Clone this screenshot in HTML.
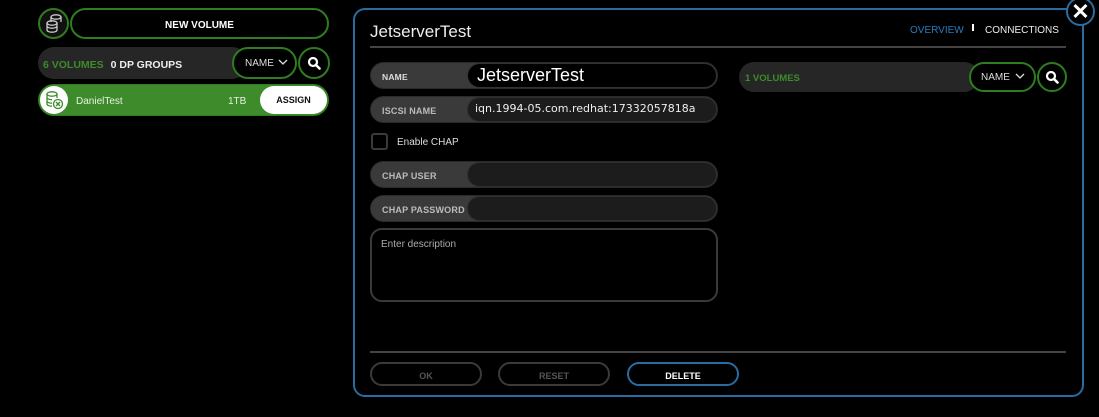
<!DOCTYPE html>
<html><head><style>
*{box-sizing:border-box;margin:0;padding:0}
body{width:1099px;height:417px;background:#000;position:relative;overflow:hidden;font-family:"Liberation Sans",sans-serif;color:#fff}
.a{position:absolute}
.pill{border-radius:16px}
.lbl{font-size:9px;font-weight:bold;color:#ddd;letter-spacing:.2px}
.row{position:absolute;left:370px;width:348px;background:#3a3a3a;border-radius:14px;border:1px solid #2a2a2a}
.row .in{position:absolute;left:96px;right:0;top:0;bottom:0;background:#1c1c1c;border-radius:13px;border:1px solid #2e2e2e}
.row .lbl{position:absolute;left:11px;top:9px}
.btn{position:absolute;top:362px;width:112px;height:24px;border:2px solid #3a3a3a;border-radius:13px;font-size:9px;font-weight:bold;color:#555;text-align:center;line-height:24px}
</style></head><body>
<!-- left -->
<div class="a" style="left:38px;top:8px;width:31px;height:31px;border:2px solid #2e7d1e;border-radius:50%;background:#111"></div>
<svg class="a" style="left:45px;top:13px" width="18" height="20" viewBox="0 0 18 20" fill="none" stroke="#ccc" stroke-width="1.3"><ellipse cx="11" cy="4" rx="5" ry="2.2"/><path d="M6 4v5M16 4v5"/><ellipse cx="7" cy="10" rx="5" ry="2.2"/><path d="M2 10v7c0 1.2 2.2 2.2 5 2.2s5-1 5-2.2v-7M2 13c0 1.2 2.2 2.2 5 2.2s5-1 5-2.2"/></svg>
<div class="a pill" style="left:70px;top:8px;width:259px;height:31px;border:2px solid #2e7d1e;font-size:10px;font-weight:bold;text-align:center;line-height:31px">NEW VOLUME</div>
<div class="a pill" style="left:38px;top:47px;width:210px;height:32px;background:#262626"></div>
<div class="a" style="left:43px;top:59px;font-size:10.5px;font-weight:bold;color:#3d8b2a">6 VOLUMES <span style="color:#eee;margin-left:4px">0 DP GROUPS</span></div>
<div class="a pill" style="left:232px;top:47px;width:65px;height:32px;border:2px solid #2e7d1e;background:#000;font-size:10px;color:#ddd;line-height:30px;padding-left:11px">NAME</div>
<svg class="a" style="left:278px;top:59px" width="10" height="6" viewBox="0 0 10 6"><path d="M1 1l4 4 4-4" fill="none" stroke="#ddd" stroke-width="1.3"/></svg>
<div class="a" style="left:298px;top:47px;width:32px;height:32px;border:2px solid #2e7d1e;border-radius:50%"></div>
<svg class="a" style="left:307px;top:56px" width="14" height="14" viewBox="0 0 14 14"><circle cx="6" cy="6" r="4" fill="none" stroke="#fff" stroke-width="2.2"/><path d="M9 9l3.5 3.5" stroke="#fff" stroke-width="2.6" stroke-linecap="round"/></svg>
<div class="a pill" style="left:38px;top:84px;width:291px;height:32px;background:#3d8b2a;border:1px solid #2e7d1e"></div>
<div class="a" style="left:40px;top:86px;width:28px;height:28px;background:#fff;border-radius:50%"></div>
<svg class="a" style="left:45px;top:90px" width="19" height="20" viewBox="0 0 19 20" fill="none" stroke="#3d8b2a" stroke-width="1.3"><ellipse cx="7" cy="4" rx="5" ry="2.2"/><path d="M2 4v10c0 1.2 2.2 2.2 5 2.2M12 4v4M2 7.5c0 1.2 2.2 2.2 5 2.2M2 11c0 1.2 2.2 2.2 5 2.2"/><circle cx="13" cy="14" r="4.5"/><path d="M11 12l4 4M15 12l-4 4"/></svg>
<div class="a" style="left:76px;top:96px;font-size:10px;color:#e8f0e4">DanielTest</div>
<div class="a" style="left:228px;top:96px;font-size:10px;color:#e8f0e4">1TB</div>
<div class="a pill" style="left:260px;top:86px;width:67px;height:28px;background:#fff;color:#111;font-size:9px;font-weight:bold;text-align:center;line-height:29px">ASSIGN</div>
<!-- panel -->
<div class="a" style="left:353px;top:8px;width:731px;height:389px;border:2px solid #2a6ca0;border-radius:12px"></div>
<div class="a" style="left:1066px;top:-3px;width:29px;height:29px;border:2px solid #2a6ca0;border-radius:50%;background:#000;text-align:center;font-size:22px;line-height:26px;font-weight:bold">&#x2715;</div>
<div class="a" style="left:370px;top:22px;font-size:17px;color:#eee">JetserverTest</div>
<div class="a" style="left:910px;top:25px;font-size:10px;color:#2a7cc0">OVERVIEW</div>
<div class="a" style="left:972px;top:24px;width:2px;height:7px;background:#fff"></div>
<div class="a" style="left:985px;top:25px;font-size:10px;color:#eee">CONNECTIONS</div>
<div class="a" style="left:370px;top:46px;width:696px;height:2px;background:#444"></div>
<div class="row" style="top:62px;height:27px"><div class="lbl" style="font-size:8.5px">NAME</div><div class="in" style="background:#000;border-color:#333"></div></div>
<div class="a" style="left:477px;top:65px;font-size:18px">JetserverTest</div>
<div class="row" style="top:96px;height:27px"><div class="lbl" style="color:#bbb">ISCSI NAME</div><div class="in"></div></div>
<div class="a" style="left:475px;top:102px;font-size:11px;font-family:'DejaVu Sans',sans-serif;color:#eee">iqn.1994-05.com.redhat:17332057818a</div>
<div class="a" style="left:371px;top:133px;width:17px;height:17px;border:2px solid #3a3a3a;border-radius:3px"></div>
<div class="a" style="left:397px;top:137px;font-size:10px;color:#ddd">Enable CHAP</div>
<div class="row" style="top:161px;height:27px"><div class="lbl" style="color:#bbb">CHAP USER</div><div class="in"></div></div>
<div class="row" style="top:195px;height:27px"><div class="lbl" style="color:#bbb">CHAP PASSWORD</div><div class="in"></div></div>
<div class="a" style="left:370px;top:228px;width:348px;height:74px;border:2px solid #3a3a3a;border-radius:12px"></div>
<div class="a" style="left:381px;top:239px;font-size:10px;color:#aaa">Enter description</div>
<div class="a" style="left:739px;top:62px;width:240px;height:30px;background:#262626;border-radius:15px"></div>
<div class="a" style="left:745px;top:73px;font-size:9.5px;font-weight:bold;color:#3d8b2a">1 VOLUMES</div>
<div class="a pill" style="left:969px;top:62px;width:67px;height:30px;border:2px solid #2e7d1e;background:#000;font-size:10px;color:#ddd;line-height:28px;padding-left:10px">NAME</div>
<svg class="a" style="left:1015px;top:73px" width="10" height="6" viewBox="0 0 10 6"><path d="M1 1l4 4 4-4" fill="none" stroke="#ddd" stroke-width="1.3"/></svg>
<div class="a" style="left:1037px;top:62px;width:30px;height:30px;border:2px solid #2e7d1e;border-radius:50%"></div>
<svg class="a" style="left:1045px;top:70px" width="14" height="14" viewBox="0 0 14 14"><circle cx="6" cy="6" r="4" fill="none" stroke="#fff" stroke-width="2.2"/><path d="M9 9l3.5 3.5" stroke="#fff" stroke-width="2.6" stroke-linecap="round"/></svg>
<div class="a" style="left:370px;top:351px;width:696px;height:2px;background:#444"></div>
<div class="btn" style="left:370px">OK</div>
<div class="btn" style="left:498px">RESET</div>
<div class="btn" style="left:627px;border-color:#2a6ca0;color:#fff">DELETE</div>
</body></html>
